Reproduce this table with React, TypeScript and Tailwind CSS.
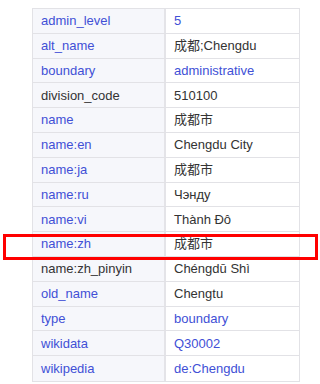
import React from "react";

type Row = {
  key: string;
  value: string;
  keyLink?: boolean;
  valueLink?: boolean;
};

const rows: Row[] = [
  { key: "admin_level", value: "5", keyLink: true, valueLink: true },
  { key: "alt_name", value: "成都;Chengdu", keyLink: true },
  { key: "boundary", value: "administrative", keyLink: true, valueLink: true },
  { key: "division_code", value: "510100" },
  { key: "name", value: "成都市", keyLink: true },
  { key: "name:en", value: "Chengdu City", keyLink: true },
  { key: "name:ja", value: "成都市", keyLink: true },
  { key: "name:ru", value: "Чэнду", keyLink: true },
  { key: "name:vi", value: "Thành Đô", keyLink: true },
  { key: "name:zh", value: "成都市", keyLink: true },
  { key: "name:zh_pinyin", value: "Chéngdū Shì" },
  { key: "old_name", value: "Chengtu", keyLink: true },
  { key: "type", value: "boundary", keyLink: true, valueLink: true },
  { key: "wikidata", value: "Q30002", keyLink: true, valueLink: true },
  { key: "wikipedia", value: "de:Chengdu", keyLink: true, valueLink: true },
];

const App = () => {
  return (
    <div
      className="relative h-[384px] w-[320px] overflow-hidden bg-white pt-[8px]"
      style={{ fontFamily: '"Liberation Sans", Arial, "Noto Sans CJK SC", sans-serif' }}
    >
      <div className="ml-[32px] w-[268px] border border-[#e2e2e6] text-[13px]">
        {rows.map((r, i) => (
          <div
            key={r.key}
            className={
              "flex h-[24.8px] " +
              (i < rows.length - 1 ? "border-b border-[#e2e2e6]" : "")
            }
          >
            <div
              className={
                "flex w-[133px] items-center border-r-2 border-[#e4e4e8] bg-[#f6f7fb] pl-[8px] " +
                (r.keyLink ? "text-[#4150d6]" : "text-[#333333]")
              }
            >
              {r.key}
            </div>
            <div
              className={
                "flex flex-1 items-center pl-[8px] " +
                (r.valueLink ? "text-[#4150d6]" : "text-[#333333]")
              }
            >
              {r.value}
            </div>
          </div>
        ))}
      </div>
      {/* highlight box */}
      <div className="absolute left-[3px] top-[234px] h-[26px] w-[315px] border-[3px] border-[#ff0000]" />
    </div>
  );
};

export default App;
